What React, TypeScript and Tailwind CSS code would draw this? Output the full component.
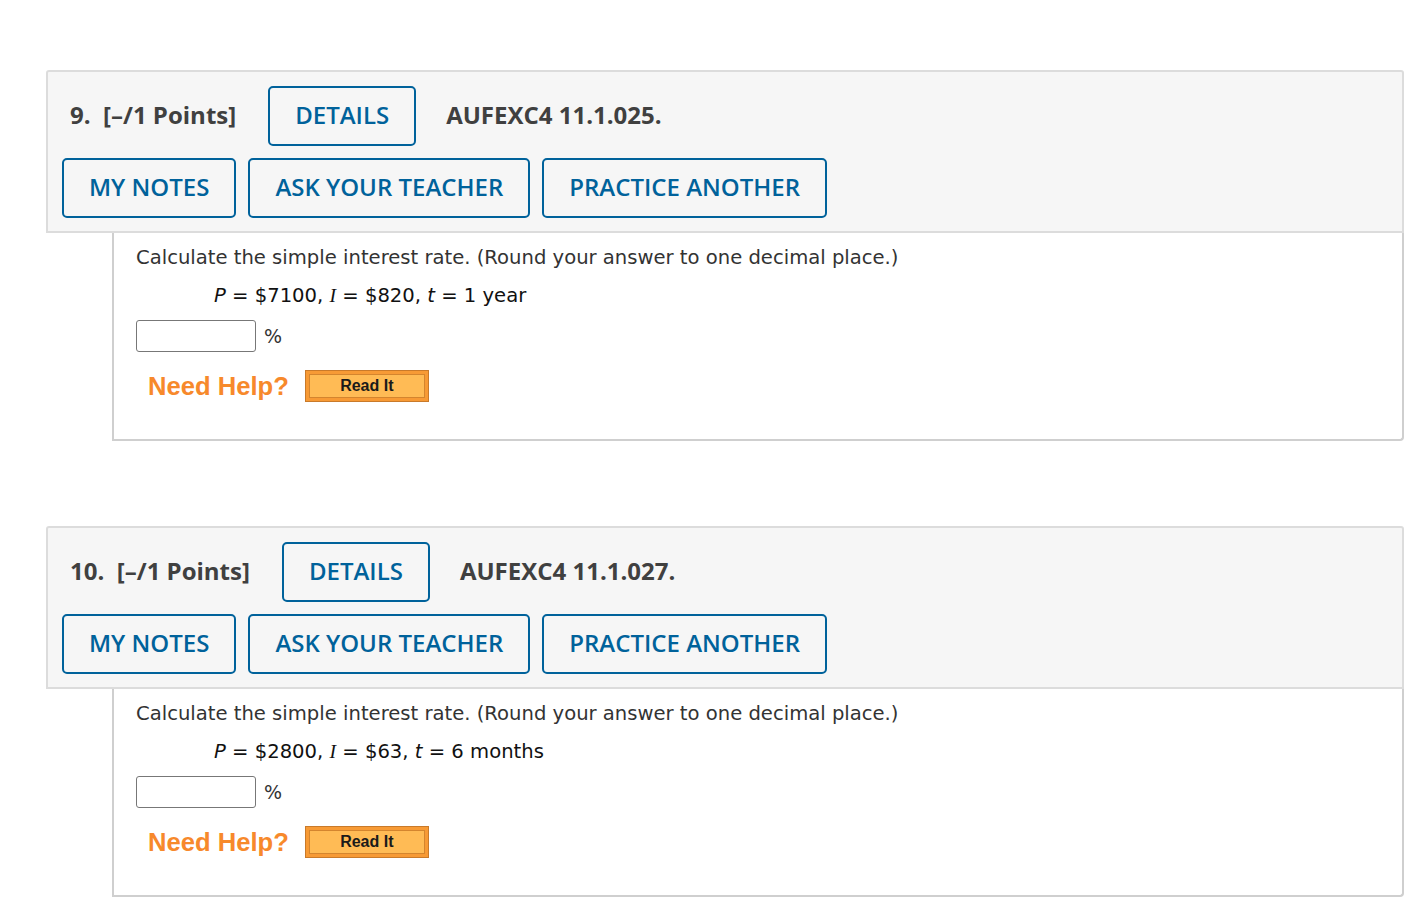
const questions = [
  {
    num: '9.',
    code: 'AUFEXC4 11.1.025.',
    p: '$7100',
    i: '$820',
    t: '1 year',
  },
  {
    num: '10.',
    code: 'AUFEXC4 11.1.027.',
    p: '$2800',
    i: '$63',
    t: '6 months',
  },
]

function OutlineButton({ children, className = '' }: { children: React.ReactNode; className?: string }) {
  return (
    <button
      className={`h-[60px] rounded-[5px] border-2 border-[#00629b] bg-transparent px-[25px] pb-[3px] text-[24px] font-semibold text-[#00629b] ${className}`}
      style={{ fontFamily: '"Open Sans", sans-serif' }}
    >
      {children}
    </button>
  )
}

function Question({ q }: { q: (typeof questions)[number] }) {
  return (
    <div>
      {/* header */}
      <div className="rounded-t-[3px] border-2 border-[#dcdcdc] bg-[#f6f6f6] pb-[13px] pl-[14px] pt-[14px]">
        <div className="flex items-center pl-[8px]">
          <span
            className="-mt-[3px] text-[24px] font-bold text-[#404040]"
            style={{ fontFamily: '"Open Sans", sans-serif' }}
          >
            {q.num}&nbsp; [–/1 Points]
          </span>
          <OutlineButton className="ml-[32px]">DETAILS</OutlineButton>
          <span
            className="-mt-[3px] ml-[30px] text-[24px] font-bold text-[#404040]"
            style={{ fontFamily: '"Open Sans", sans-serif' }}
          >
            {q.code}
          </span>
        </div>
        <div className="mt-[12px] flex gap-[12px]">
          <OutlineButton>MY NOTES</OutlineButton>
          <OutlineButton>ASK YOUR TEACHER</OutlineButton>
          <OutlineButton>PRACTICE ANOTHER</OutlineButton>
        </div>
      </div>

      {/* body */}
      <div
        className="ml-[66px] h-[208px] rounded-br-[4px] border-x-2 border-b-2 border-[#cfcfcf] bg-white pl-[22px] pt-[12px] text-[#333]"
        style={{ fontFamily: '"DejaVu Sans", Verdana, sans-serif' }}
      >
        <p className="text-[19.6px] leading-[26px]">
          Calculate the simple interest rate. (Round your answer to one decimal place.)
        </p>
        <p className="mt-[12px] pl-[78px] text-[19.6px] leading-[26px] text-[#111]">
          <i>P</i> = {q.p}, <i style={{ fontFamily: '"Liberation Serif", serif' }}>I</i> = {q.i},{' '}
          <i>t</i> = {q.t}
        </p>
        <div className="mt-[11px] flex items-center">
          <div className="h-[32px] w-[120px] rounded-[3px] border-[1.5px] border-[#777] bg-white" />
          <span className="ml-[8px] text-[19px] text-[#333]">%</span>
        </div>
        <div
          className="mt-[15px] flex items-center pl-[12px]"
          style={{ fontFamily: '"Liberation Sans", Arial, sans-serif' }}
        >
          <span className="text-[25.6px] font-bold text-[#f7892b]">Need Help?</span>
          <div className="ml-[16px] h-[32px] w-[124px] border border-[#c97a2a] bg-[#f79a35] p-[3px]">
            <div className="flex h-full w-full items-center justify-center border border-[#d4852e] bg-[#ffbb55] text-[16px] font-bold text-[#1a1a1a]">
              Read It
            </div>
          </div>
        </div>
      </div>
    </div>
  )
}

export default function App() {
  return (
    <div className="min-h-[919px] bg-white pl-[46px] pr-[16px] pt-[70px]">
      <div className="flex flex-col gap-[85px]">
        {questions.map(q => (
          <Question key={q.num} q={q} />
        ))}
      </div>
    </div>
  )
}
